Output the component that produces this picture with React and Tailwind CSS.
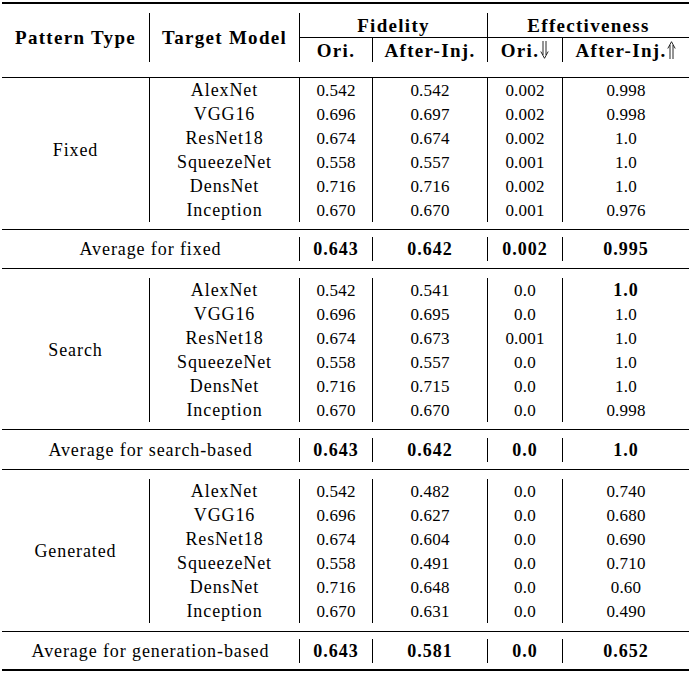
import React from 'react';

const COLS = 'grid grid-cols-[148px_150px_73px_115px_75px_126px]';

const sections = [
    {
        label: 'Fixed',
        avgLabel: 'Average for fixed',
        avg: ['0.643', '0.642', '0.002', '0.995'],
        rows: [
            ['AlexNet', '0.542', '0.542', '0.002', '0.998'],
            ['VGG16', '0.696', '0.697', '0.002', '0.998'],
            ['ResNet18', '0.674', '0.674', '0.002', '1.0'],
            ['SqueezeNet', '0.558', '0.557', '0.001', '1.0'],
            ['DensNet', '0.716', '0.716', '0.002', '1.0'],
            ['Inception', '0.670', '0.670', '0.001', '0.976'],
        ],
    },
    {
        label: 'Search',
        avgLabel: 'Average for search-based',
        avg: ['0.643', '0.642', '0.0', '1.0'],
        rows: [
            ['AlexNet', '0.542', '0.541', '0.0', '1.0', true],
            ['VGG16', '0.696', '0.695', '0.0', '1.0'],
            ['ResNet18', '0.674', '0.673', '0.001', '1.0'],
            ['SqueezeNet', '0.558', '0.557', '0.0', '1.0'],
            ['DensNet', '0.716', '0.715', '0.0', '1.0'],
            ['Inception', '0.670', '0.670', '0.0', '0.998'],
        ],
    },
    {
        label: 'Generated',
        avgLabel: 'Average for generation-based',
        avg: ['0.643', '0.581', '0.0', '0.652'],
        rows: [
            ['AlexNet', '0.542', '0.482', '0.0', '0.740'],
            ['VGG16', '0.696', '0.627', '0.0', '0.680'],
            ['ResNet18', '0.674', '0.604', '0.0', '0.690'],
            ['SqueezeNet', '0.558', '0.491', '0.0', '0.710'],
            ['DensNet', '0.716', '0.648', '0.0', '0.60'],
            ['Inception', '0.670', '0.631', '0.0', '0.490'],
        ],
    },
];

// padding around each block, taken from the picture
const bodyPad = ['pt-0 pb-[7px]', 'pt-[9px] pb-[7px]', 'pt-[9px] pb-[8px]'];
const avgPad = ['pt-[7px] pb-[7px]', 'pt-[8px] pb-[7px]', 'pt-[7px] pb-[6px]'];

const text = 'text-[18px] tracking-[0.9px]';
const num = 'text-[17px] tracking-[0.2px]';
const bold = 'font-bold text-[18px] tracking-[1px]';

function Cell({ children, line = true, className = '' }) {
    return (
        <div className={`h-6 flex items-center justify-center leading-none ${line ? 'border-r border-black' : ''} ${className}`}>
            {children}
        </div>
    );
}

function Rule({ thick }) {
    return <div className={thick ? 'h-[2px] bg-black' : 'h-px bg-black'} />;
}

function Arrow({ up }) {
    return (
        <svg width="9" height="18" viewBox="0 0 9 18" className={`ml-[1px] ${up ? 'rotate-180' : ''}`}>
            <path d="M3 0V14M6 0V14M0.8 10.5L4.5 17.3L8.2 10.5" fill="none" stroke="#111" strokeWidth="0.9" />
        </svg>
    );
}

export default function App() {
    return (
        <div className="bg-white text-black pt-[2px] pl-[2px] w-[690px] h-[673px] font-['Liberation_Serif',serif]">
            <div className="w-[687px]">
                <Rule thick />
                {/* Header */}
                <div className={`${COLS} grid-rows-[25px_24px] pt-[9px] pb-[15px] font-bold text-[19px] tracking-[1.3px] leading-none`}>
                    <div className="row-span-2 border-r border-black flex items-center justify-center">Pattern Type</div>
                    <div className="row-span-2 border-r border-black flex items-center justify-center">Target Model</div>
                    <div className="col-span-2 border-r border-b border-black flex items-center justify-center">Fidelity</div>
                    <div className="col-span-2 border-b border-black flex items-center justify-center">Effectiveness</div>
                    <div className="border-r border-black flex items-center justify-center">Ori.</div>
                    <div className="border-r border-black flex items-center justify-center">After-Inj.</div>
                    <div className="border-r border-black flex items-center justify-center">
                        Ori.<Arrow />
                    </div>
                    <div className="flex items-center justify-center">
                        After-Inj.<Arrow up />
                    </div>
                </div>

                {sections.map((s, i) => (
                    <React.Fragment key={s.label}>
                        <Rule />
                        <div className={`${COLS} ${bodyPad[i]}`}>
                            <div className={`row-span-6 border-r border-black flex items-center justify-center leading-none ${text}`}>
                                {s.label}
                            </div>
                            {s.rows.map((r) => (
                                <React.Fragment key={r[0]}>
                                    <Cell className={text}>{r[0]}</Cell>
                                    <Cell className={num}>{r[1]}</Cell>
                                    <Cell className={num}>{r[2]}</Cell>
                                    <Cell className={num}>{r[3]}</Cell>
                                    <Cell line={false} className={r[5] ? bold : num}>{r[4]}</Cell>
                                </React.Fragment>
                            ))}
                        </div>
                        <Rule />
                        <div className={`${COLS} ${avgPad[i]}`}>
                            <Cell className={`col-span-2 ${text}`}>{s.avgLabel}</Cell>
                            <Cell className={bold}>{s.avg[0]}</Cell>
                            <Cell className={bold}>{s.avg[1]}</Cell>
                            <Cell className={bold}>{s.avg[2]}</Cell>
                            <Cell line={false} className={bold}>{s.avg[3]}</Cell>
                        </div>
                    </React.Fragment>
                ))}
                <Rule thick />
            </div>
        </div>
    );
}
